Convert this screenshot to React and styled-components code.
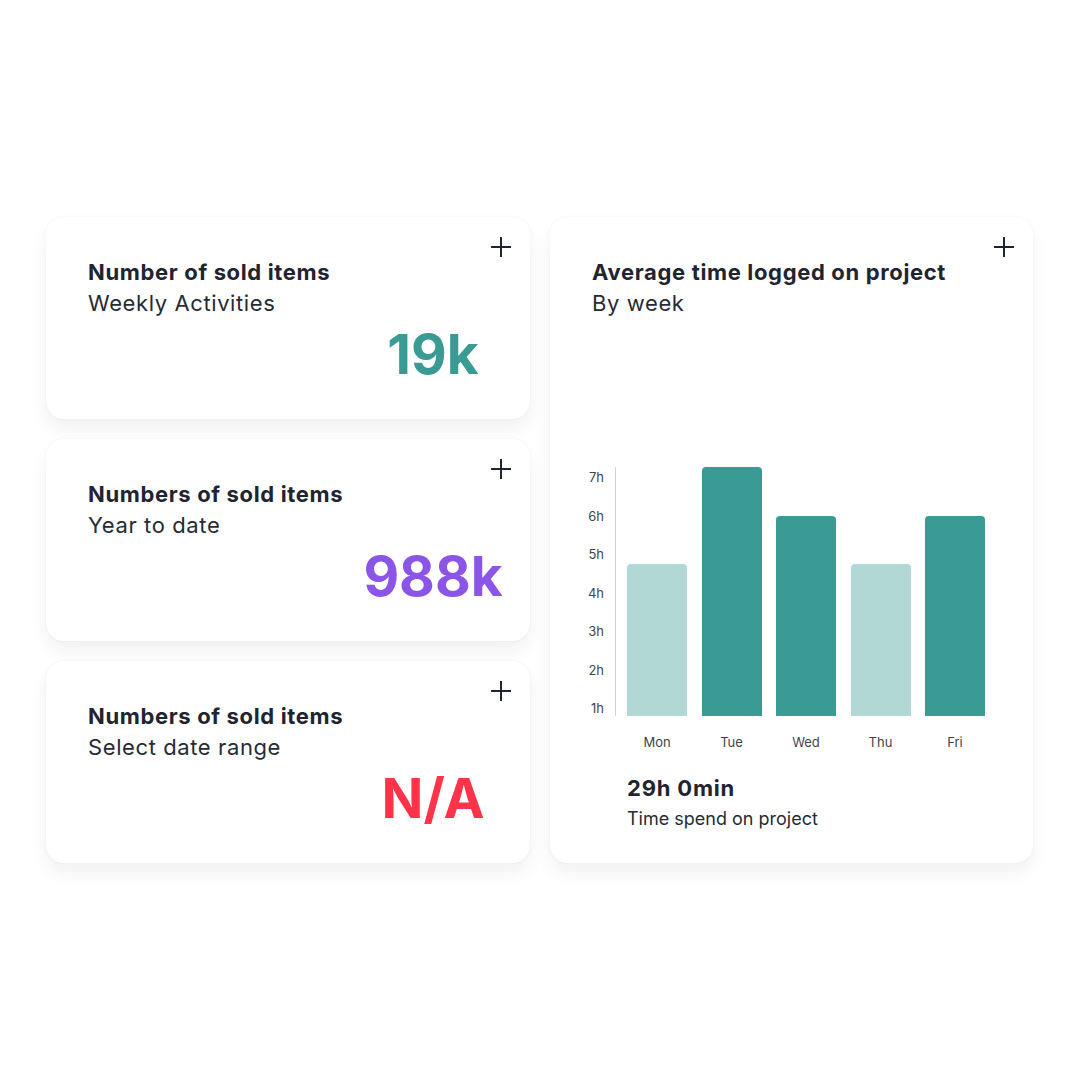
import React from "react";
import styled, { createGlobalStyle } from "styled-components";

const GlobalStyle = createGlobalStyle`
  html, body {
    margin: 0;
    padding: 0;
    background: #ffffff;
    font-family: Inter, "Noto Sans", Arial, sans-serif;
    color: #1f2430;
  }
`;

const Page = styled.div`
  width: 1080px;
  height: 1080px;
  padding: 217px 0 0 46px;
  box-sizing: border-box;
`;

const Board = styled.div`
  display: grid;
  grid-template-columns: 484px 483px;
  column-gap: 20px;
`;

const Column = styled.div`
  display: flex;
  flex-direction: column;
  gap: 20px;
`;

const Card = styled.div`
  position: relative;
  background: #fff;
  border-radius: 18px;
  box-shadow: 0 10px 18px rgba(20, 24, 32, 0.06), 0 0 3px rgba(20, 24, 32, 0.05);
  box-sizing: border-box;
  padding: 40px 42px 0;
  height: ${(p) => (p.$tall ? "auto" : "202px")};
  display: flex;
  flex-direction: column;
`;

const AddButton = styled.button`
  position: absolute;
  top: 19px;
  right: 18px;
  width: 22px;
  height: 22px;
  padding: 0;
  border: 0;
  background: none;
  color: #1f2430;
  cursor: pointer;
  svg {
    display: block;
  }
`;

const Title = styled.div`
  font-size: 22px;
  line-height: 31px;
  font-weight: 700;
  letter-spacing: 0.65px;
  color: #1f2430;
`;

const Subtitle = styled.div`
  font-size: 22px;
  line-height: 31px;
  font-weight: 400;
  letter-spacing: 0.6px;
  color: #262b34;
`;

const Value = styled.div`
  margin-top: 8px;
  align-self: flex-end;
  margin-right: -45px;
  width: 200px;
  text-align: center;
  font-size: 55px;
  line-height: 55px;
  font-weight: 700;
  color: ${(p) => p.$color};
`;

const ChartRow = styled.div`
  display: flex;
  margin: 148px 0 0 -9px;
  gap: 11px;
`;

const YAxis = styled.div`
  width: 21px;
  height: 249px;
  padding-top: 2px;
  box-sizing: border-box;
  display: flex;
  flex-direction: column;
  justify-content: space-between;
  text-align: right;
  font-size: 13px;
  line-height: 16px;
  color: #3f444c;
`;

const Plot = styled.div`
  height: 249px;
  border-left: 1px solid #cfd3d8;
  padding-left: 11px;
  display: grid;
  grid-template-columns: repeat(5, 60px);
  column-gap: 14.5px;
  align-items: end;
`;

const Bar = styled.div`
  height: ${(p) => p.$h}px;
  background: ${(p) => (p.$light ? "#b2d8d6" : "#3a9a94")};
  border-radius: 4px 4px 0 0;
`;

const DayRow = styled.div`
  margin: 18px 0 0 35px;
  display: grid;
  grid-template-columns: repeat(5, 60px);
  column-gap: 14.5px;
  font-size: 13px;
  line-height: 16px;
  color: #3f444c;
  text-align: center;
`;

const Summary = styled.div`
  margin: 23px 0 0 35px;
`;

const SummaryValue = styled.div`
  font-size: 22px;
  line-height: 31px;
  font-weight: 700;
  letter-spacing: 0.8px;
  color: #1f2430;
`;

const SummaryLabel = styled.div`
  margin-top: 2px;
  font-size: 18px;
  line-height: 26px;
  color: #262b34;
`;

function PlusIcon() {
  return (
    <AddButton aria-label="Add">
      <svg width="22" height="22" viewBox="0 0 22 22">
        <path d="M11 1v20M1 11h20" stroke="currentColor" strokeWidth="2" fill="none" />
      </svg>
    </AddButton>
  );
}

const stats = [
  { title: "Number of sold items", sub: "Weekly Activities", value: "19k", color: "#3a9a94" },
  { title: "Numbers of sold items", sub: "Year to date", value: "988k", color: "#8b55e8" },
  { title: "Numbers of sold items", sub: "Select date range", value: "N/A", color: "#ff3349" },
];

const days = [
  { d: "Mon", h: 152, light: true },
  { d: "Tue", h: 249 },
  { d: "Wed", h: 200 },
  { d: "Thu", h: 152, light: true },
  { d: "Fri", h: 200 },
];

export default function App() {
  return (
    <Page>
      <GlobalStyle />
      <Board>
        <Column>
          {stats.map((s, i) => (
            <Card key={i}>
              <PlusIcon />
              <Title>{s.title}</Title>
              <Subtitle>{s.sub}</Subtitle>
              <Value $color={s.color}>{s.value}</Value>
            </Card>
          ))}
        </Column>
        <Card $tall>
          <PlusIcon />
          <Title>Average time logged on project</Title>
          <Subtitle>By week</Subtitle>
          <ChartRow>
            <YAxis>
              {["7h", "6h", "5h", "4h", "3h", "2h", "1h"].map((l) => (
                <span key={l}>{l}</span>
              ))}
            </YAxis>
            <Plot>
              {days.map((d) => (
                <Bar key={d.d} $h={d.h} $light={d.light} />
              ))}
            </Plot>
          </ChartRow>
          <DayRow>
            {days.map((d) => (
              <span key={d.d}>{d.d}</span>
            ))}
          </DayRow>
          <Summary>
            <SummaryValue>29h 0min</SummaryValue>
            <SummaryLabel>Time spend on project</SummaryLabel>
          </Summary>
        </Card>
      </Board>
    </Page>
  );
}
